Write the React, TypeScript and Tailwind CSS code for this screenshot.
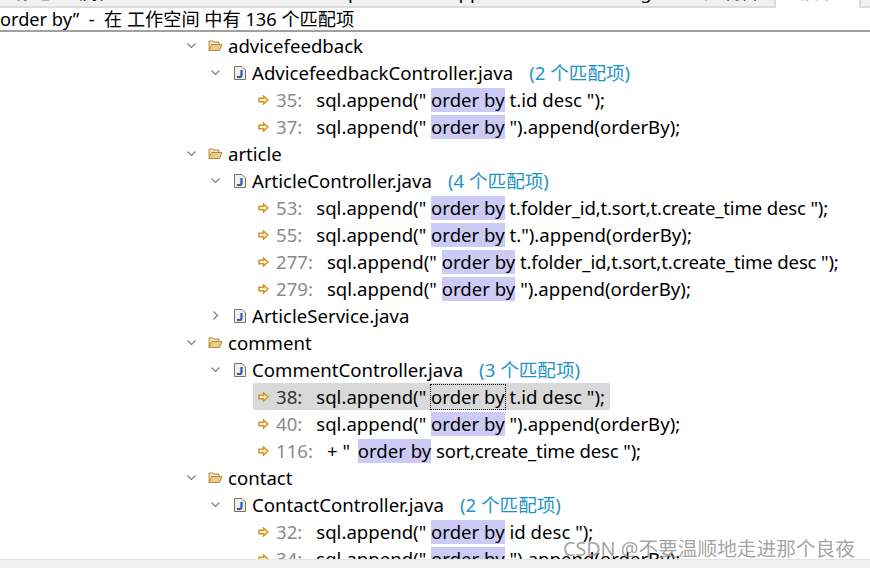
const HL = "bg-[#cdcbf5]";

function Chevron({ open }: { open: boolean }) {
  return (
    <svg width="11" height="11" viewBox="0 0 11 11" className="shrink-0" fill="none" stroke="#7a7a7a" strokeWidth="1.1">
      {open ? <path d="M1.5 3.5 L5.5 7.5 L9.5 3.5" /> : <path d="M3.5 1.5 L7.5 5.5 L3.5 9.5" />}
    </svg>
  );
}

function Folder() {
  return (
    <svg width="15" height="13" viewBox="0 0 15 13" className="shrink-0">
      <path d="M1 11.5 V2 H5 L6 3 H11 V5" fill="#f5e3b8" stroke="#b08a45" strokeWidth="1" />
      <path d="M1 11.5 L3.5 5.5 H14 L11.5 11.5 Z" fill="#eecb85" stroke="#b08a45" strokeWidth="1" />
    </svg>
  );
}

function JavaFile() {
  return (
    <svg width="12" height="14" viewBox="0 0 12 14" className="shrink-0">
      <path d="M.5 .5 H8 L11.5 4 V13.5 H.5 Z" fill="#eeeef2" stroke="#7f7448" strokeWidth="1" />
      <path d="M7.5 4 V9 Q7.5 11 5.5 11 H3" fill="none" stroke="#2f5da8" strokeWidth="2.2" />
    </svg>
  );
}

function Arrow() {
  return (
    <svg width="11" height="10" viewBox="0 0 11 10" className="shrink-0">
      <path d="M1 3.2 H5.5 V1 L10 5 L5.5 9 V6.8 H1 Z" fill="#fdf0c0" stroke="#d2942a" strokeWidth="1.5" />
    </svg>
  );
}

function FolderRow({ name }: { name: string }) {
  return (
    <div className="h-[27px] flex items-center pl-[186px]">
      <Chevron open />
      <div className="ml-[11px]"><Folder /></div>
      <span className="ml-[5px]">{name}</span>
    </div>
  );
}

function FileRow({ name, count, open = true }: { name: string; count?: string; open?: boolean }) {
  return (
    <div className="h-[27px] flex items-center pl-[210px]">
      <Chevron open={open} />
      <div className="ml-[13px]"><JavaFile /></div>
      <span className="ml-[6px]">{name}</span>
      {count && <span className="ml-[16px] text-[#1e94c4]">{count}</span>}
    </div>
  );
}

function Match({ line, pre, post, selected, tight, gap }: { line: string; pre: string; post: string; selected?: boolean; tight?: boolean; gap?: boolean }) {
  return (
    <div className="h-[27px] flex items-center pl-[253px]">
      <div className={`flex items-center h-[27px] pl-[5px] pr-[5px] rounded-[2px] ${selected ? "bg-[#d9d9d9]" : ""}`}>
        <Arrow />
        <span className={`ml-[7px] whitespace-pre ${selected ? "text-[#333333]" : "text-[#8a8a8a]"}`}>{line}:</span>
        <span className="ml-[14px] whitespace-pre">{pre}</span>
        <span className={`whitespace-pre h-[24px] flex items-center ${gap ? "ml-[3px]" : ""} ${selected ? "outline outline-1 outline-dotted outline-black" : HL}`}>order by</span>
        <span className={`whitespace-pre ${tight ? "tracking-[-0.17px]" : ""}`}>{post}</span>
      </div>
    </div>
  );
}

const A = 'sql.append(" ';

export default function App() {
  return (
    <div className="relative w-[870px] h-[568px] overflow-hidden bg-white flex flex-col text-[18.6px] leading-[27px] text-black font-['Noto_Sans','Noto_Sans_CJK_SC',sans-serif]">
      <div className="h-[8px] shrink-0 flex">
        <div className="flex-1 bg-[#f0f0f0] border-b-2 border-[#dcdcdc] flex overflow-hidden whitespace-pre">
          <span className="-mt-[22px] ml-[14px]">标记</span>
          <span className="-mt-[22px] ml-[28px]">属性</span>
          <span className="-mt-[22px] ml-[101px]">Data Source Explorer</span>
          <span className="-mt-[22px] ml-[31px]">Snippets</span>
          <span className="-mt-[22px] ml-[103px]">Progress</span>
          <span className="-mt-[22px] ml-[16px]">控制台</span>
        </div>
        <div className="w-[87px] bg-white border-x-2 border-[#dcdcdc] flex overflow-hidden whitespace-pre">
          <span className="-mt-[22px] ml-[24px]">搜索</span>
        </div>
        <div className="w-[9px] bg-[#f0f0f0] border-b-2 border-[#dcdcdc]" />
      </div>
      <div className="h-[24px] shrink-0 border-b-2 border-[#a0a0a0] whitespace-pre leading-[22px] overflow-hidden text-[18.2px]">
        order by”  -  在 工作空间 中有 136 个匹配项
      </div>
      <div className="flex-1 overflow-hidden">
        <FolderRow name="advicefeedback" />
        <FileRow name="AdvicefeedbackController.java" count="(2 个匹配项)" />
        <Match line="35" pre={A} post=" t.id desc &quot;);" />
        <Match line="37" pre={A} post=' ").append(orderBy);' />
        <FolderRow name="article" />
        <FileRow name="ArticleController.java" count="(4 个匹配项)" />
        <Match line="53" pre={A} post=" t.folder_id,t.sort,t.create_time desc &quot;);" tight />
        <Match line="55" pre={A} post=' t.").append(orderBy);' />
        <Match line="277" pre={A} post=" t.folder_id,t.sort,t.create_time desc &quot;);" tight />
        <Match line="279" pre={A} post=' ").append(orderBy);' />
        <FileRow name="ArticleService.java" open={false} />
        <FolderRow name="comment" />
        <FileRow name="CommentController.java" count="(3 个匹配项)" />
        <Match line="38" pre={A} post=" t.id desc &quot;);" selected />
        <Match line="40" pre={A} post=' ").append(orderBy);' />
        <Match line="116" pre='+ " ' post=" sort,create_time desc &quot;);" tight gap />
        <FolderRow name="contact" />
        <FileRow name="ContactController.java" count="(2 个匹配项)" />
        <Match line="32" pre={A} post=" id desc &quot;);" />
        <Match line="34" pre={A} post=' ").append(orderBy);' />
      </div>
      <div className="h-[9px] shrink-0 bg-[#f0f0f0] border-t border-[#e4e4e4]" />
      <div className="absolute left-[563px] top-[537px] text-[19.7px] leading-[24px] text-[#8c8c8c]/80 whitespace-pre">CSDN @不要温顺地走进那个良夜</div>
    </div>
  );
}
